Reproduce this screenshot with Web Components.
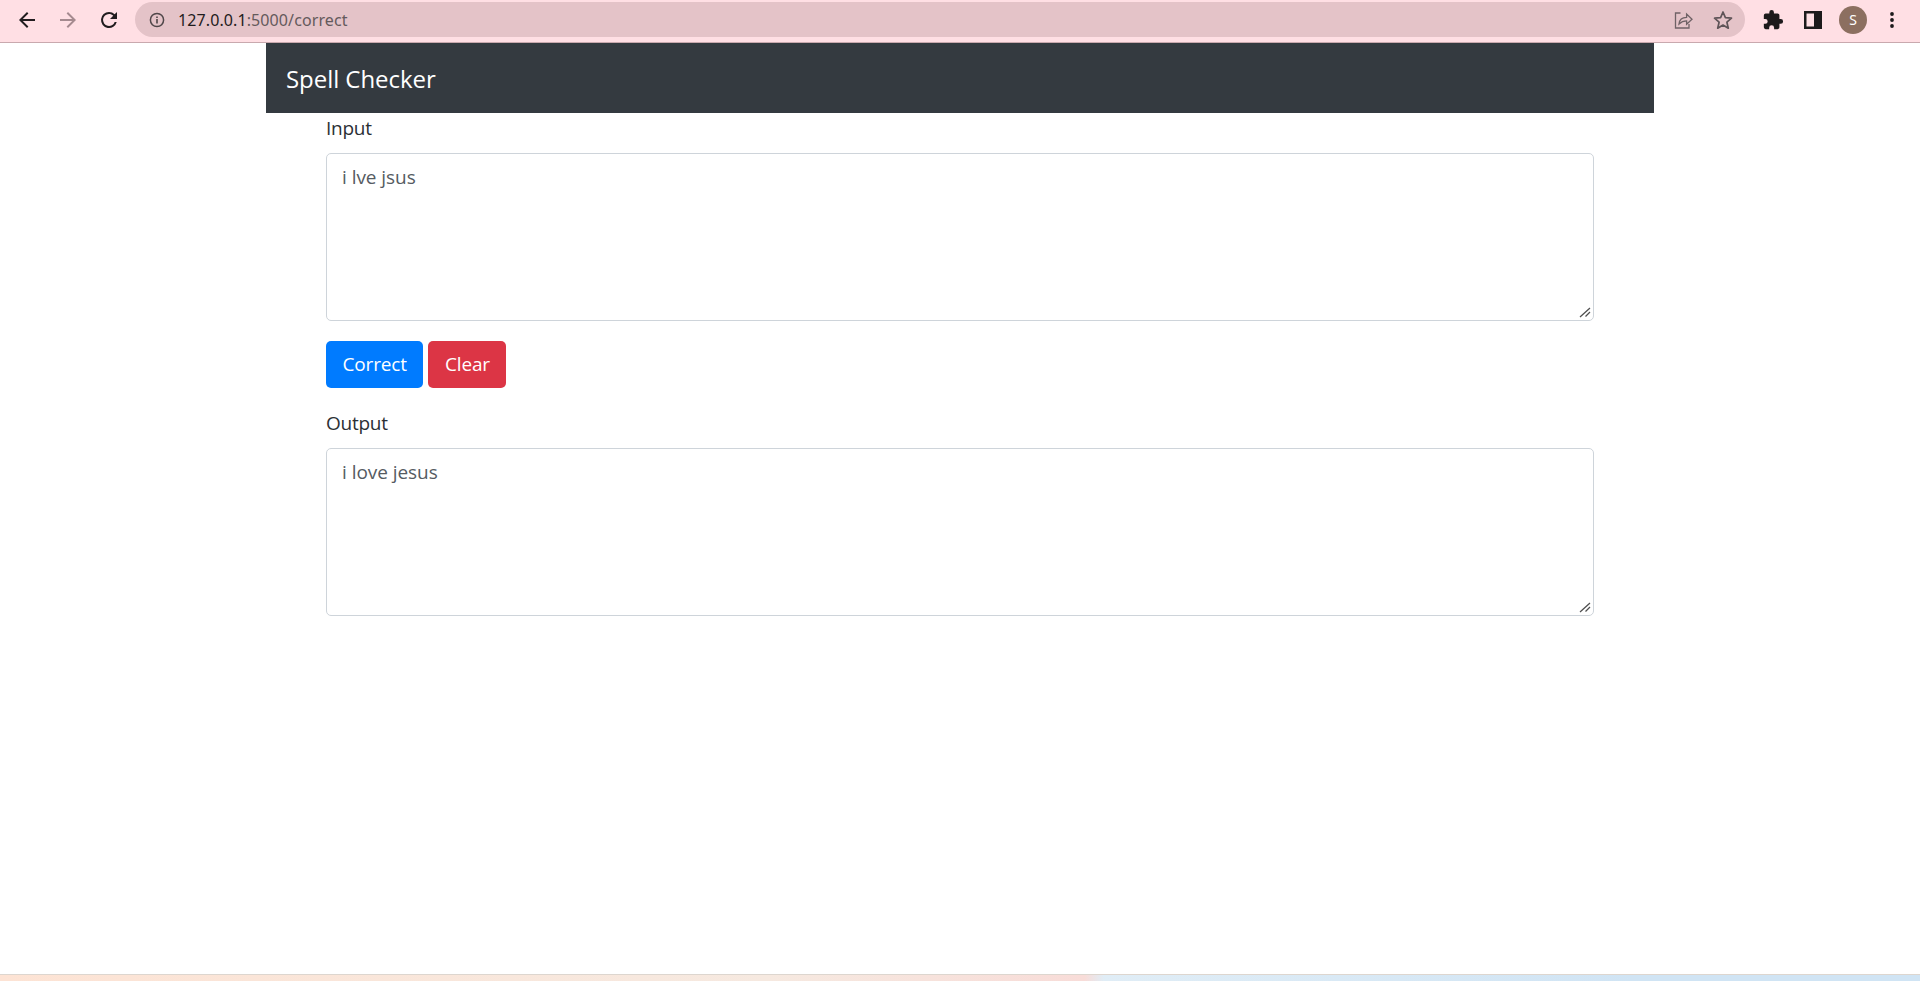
<!DOCTYPE html>
<html>
<head>
<meta charset="utf-8">
<title>Spell Checker</title>
<style>
  html, body { height: 100%; }
  body {
    margin: 0;
    display: flex;
    flex-direction: column;
    overflow: hidden;
    background: #fff;
    font-family: "Open Sans", "Noto Sans", sans-serif;
  }
  .page { flex: 1; }
  .actions { display: flex; gap: 5px; }
</style>
</head>
<body>
<browser-bar url-host="127.0.0.1" url-path=":5000/correct"></browser-bar>
<div class="page">
  <spell-page>
    <app-navbar slot="nav">Spell Checker</app-navbar>
    <text-field label="Input">i lve jsus</text-field>
    <div class="actions" slot="actions">
      <app-button color="#007bff">Correct</app-button>
      <app-button color="#dc3545">Clear</app-button>
    </div>
    <text-field slot="after" label="Output">i love jesus</text-field>
  </spell-page>
</div>
<task-strip></task-strip>

<script>
class BrowserBar extends HTMLElement {
    constructor() {
        super();
        this.shadowDOM = this.attachShadow({mode: "open"});
    }

    connectedCallback() {
        this.shadowDOM.innerHTML = `
           <style>
               :host {
                   display: flex;
                   align-items: center;
                   box-sizing: border-box;
                   height: 43px;
                   padding-bottom: 3px;
                   background: #ffdfe4;
                   border-bottom: 1px solid #c9a9ae;
                   font-family: "Noto Sans", "Open Sans", sans-serif;
               }
               .nav {
                   display: flex;
                   align-items: center;
                   gap: 17px;
                   padding-left: 15px;
                   width: 135px;
                   box-sizing: border-box;
               }
               svg { display: block; flex: none; }
               .omni {
                   display: flex;
                   align-items: center;
                   width: 1610px;
                   height: 35px;
                   border-radius: 18px;
                   background: #e4c3c8;
                   box-sizing: border-box;
                   padding: 0 11px 0 14px;
               }
               .url {
                   margin-left: 13px;
                   flex: 1;
                   font-size: 16px;
                   letter-spacing: 0.1px;
                   color: #1f1c1d;
               }
               .url span { color: #645a5c; }
               .omni svg + svg { margin-left: 18px; }
               .tools {
                   display: flex;
                   align-items: center;
                   margin-left: 17px;
               }
               .avatar {
                   width: 28px;
                   height: 28px;
                   border-radius: 50%;
                   background: #8c6f60;
                   color: #fff;
                   font-size: 14px;
                   display: flex;
                   align-items: center;
                   justify-content: center;
                   margin: 0 22px 0 17px;
               }
           </style>
           <div class="nav">
               <svg width="24" height="24" viewBox="0 0 24 24"><path d="M20 11H7.8l5.6-5.6L12 4l-8 8 8 8 1.4-1.4L7.8 13H20z" fill="#211c1e"/></svg>
               <svg width="24" height="24" viewBox="0 0 24 24"><path d="M4 11h12.2l-5.6-5.6L12 4l8 8-8 8-1.4-1.4 5.6-5.6H4z" fill="#a58a8f"/></svg>
               <svg width="24" height="24" viewBox="0 0 24 24"><path d="M17.65 6.35A7.95 7.95 0 0 0 12 4a8 8 0 1 0 7.75 10h-2.08A6 6 0 1 1 12 6c1.66 0 3.14.69 4.22 1.78L13 11h7V4z" fill="#211c1e"/></svg>
           </div>
           <div class="omni">
               <svg width="16" height="16" viewBox="0 0 16 16"><circle cx="8" cy="8" r="6.6" fill="none" stroke="#4f4649" stroke-width="1.5"/><path d="M7.2 7h1.6v4.5H7.2zM7.2 4.4h1.6V6H7.2z" fill="#4f4649"/></svg>
               <div class="url">${this.getAttribute("url-host")}<span>${this.getAttribute("url-path")}</span></div>
               <svg width="22" height="22" viewBox="0 0 22 22" fill="none" stroke="#6f6266" stroke-width="1.3"><path d="M8.5 4H3.5v15h13.5v-4"/><path d="M7 15c.4-4 3.4-6.6 7.6-6.6V5l5.4 5.2-5.4 5v-3.4c-3 0-5.6 1.2-7.6 3.2z"/></svg>
               <svg width="22" height="22" viewBox="0 0 22 22"><path d="M11 3l2.4 5.7 6.1.5-4.6 4 1.4 6L11 16l-5.3 3.2 1.4-6-4.6-4 6.1-.5z" fill="none" stroke="#5f5458" stroke-width="1.7" stroke-linejoin="round"/></svg>
           </div>
           <div class="tools">
               <svg width="22" height="22" viewBox="0 0 24 24"><path d="M20.5 11H19V7a2 2 0 0 0-2-2h-4V3.5a2.5 2.5 0 0 0-5 0V5H4a2 2 0 0 0-2 2v3.8h1.500a2.700 2.700 0 0 1 0 5.400H2V20a2 2 0 0 0 2 2h3.800v-1.500a2.700 2.700 0 0 1 5.400 0V22H17a2 2 0 0 0 2-2v-4h1.500a2.500 2.500 0 0 0 0-5z" fill="#1d1a1b"/></svg>
               <svg style="margin-left:20px" width="18" height="18" viewBox="0 0 18 18"><path d="M0 0h18v18H0z" fill="#1d1a1b"/><path d="M2.500 2.500h7.500v13H2.500z" fill="#ffdfe4"/></svg>
               <div class="avatar">S</div>
               <svg width="6" height="18" viewBox="0 0 6 18"><circle cx="3" cy="3" r="1.900" fill="#1d1a1b"/><circle cx="3" cy="9" r="1.900" fill="#1d1a1b"/><circle cx="3" cy="15" r="1.900" fill="#1d1a1b"/></svg>
           </div>`;
    }
}

class SpellPage extends HTMLElement {
    constructor() {
        super();
        this.shadowDOM = this.attachShadow({mode: "open"});
        this.shadowDOM.innerHTML = `
           <style>
               :host {
                   display: block;
                   width: 1388px;
                   margin-left: 266px;
               }
               .body {
                   display: flex;
                   flex-direction: column;
                   padding: 0 60px;
               }
               .actions { margin: 20px 0 20px; }
           </style>
           <slot name="nav"></slot>
           <div class="body">
               <slot></slot>
               <div class="actions"><slot name="actions"></slot></div>
               <slot name="after"></slot>
           </div>`;
    }
}

class AppNavbar extends HTMLElement {
    constructor() {
        super();
        this.shadowDOM = this.attachShadow({mode: "open"});
        this.shadowDOM.innerHTML = `
           <style>
               :host {
                   display: flex;
                   align-items: center;
                   height: 70px;
                   padding-left: 20px;
                   background: #343a40;
                   color: #fff;
                   font-size: 24px;
                   letter-spacing: -0.05px;
               }
           </style>
           <slot></slot>`;
    }
}

class TextField extends HTMLElement {
    constructor() {
        super();
        this.shadowDOM = this.attachShadow({mode: "open"});
    }

    connectedCallback() {
        this.shadowDOM.innerHTML = `
           <style>
               :host { display: block; }
               label {
                   display: block;
                   height: 30px;
                   line-height: 31px;
                   margin-bottom: 10px;
                   font-size: 19px;
                   letter-spacing: -0.25px;
                   color: #2b3035;
               }
               .box { position: relative; }
               textarea {
                   display: block;
                   box-sizing: border-box;
                   width: 100%;
                   height: 168px;
                   margin: 0;
                   padding: 8px 15px;
                   border: 1px solid #ced4da;
                   border-radius: 5px;
                   outline: none;
                   font: 19px/30px "Open Sans", "Noto Sans", sans-serif;
                   letter-spacing: -0.05px;
                   color: #555b62;
                   background: #fff;
               }
               textarea::-webkit-resizer { background: transparent; }
               svg {
                   position: absolute;
                   right: 2px;
                   bottom: 2px;
                   pointer-events: none;
               }
           </style>
           <label>${this.getAttribute("label")}</label>
           <div class="box">
               <textarea spellcheck="false">${this.textContent}</textarea>
               <svg width="14" height="13" viewBox="0 0 14 13" fill="none" stroke="#505050" stroke-width="1.300"><path d="M2 11l10-9M7.500 10.500L12 6"/></svg>
           </div>`;
    }
}

class AppButton extends HTMLElement {
    constructor() {
        super();
        this.shadowDOM = this.attachShadow({mode: "open"});
    }

    connectedCallback() {
        this.shadowDOM.innerHTML = `
           <style>
               :host { display: inline-block; }
               button {
                   display: block;
                   height: 47px;
                   padding: 0 16.5px 2px;
                   border: 0;
                   border-radius: 5px;
                   background: ${this.getAttribute("color")};
                   color: #fff;
                   font: 19px "Open Sans", "Noto Sans", sans-serif;
                   letter-spacing: -0.15px;
               }
           </style>
           <button type="button"><slot></slot></button>`;
    }
}

class TaskStrip extends HTMLElement {
    constructor() {
        super();
        this.shadowDOM = this.attachShadow({mode: "open"});
        this.shadowDOM.innerHTML = `
           <style>
               :host {
                   display: block;
                   flex: none;
                   box-sizing: border-box;
                   height: 7px;
                   border-top: 1px solid #ddd6cf;
                   background: linear-gradient(90deg, #fde3d4 0%, #f6e9e0 40%, #f8dcd8 56.500%, #e0edf6 57.500%, #d0e4f4 85%, #d0e4f4 100%);
               }
           </style>`;
    }
}

customElements.define("browser-bar", BrowserBar);
customElements.define("spell-page", SpellPage);
customElements.define("app-navbar", AppNavbar);
customElements.define("text-field", TextField);
customElements.define("app-button", AppButton);
customElements.define("task-strip", TaskStrip);
</script>
</body>
</html>
